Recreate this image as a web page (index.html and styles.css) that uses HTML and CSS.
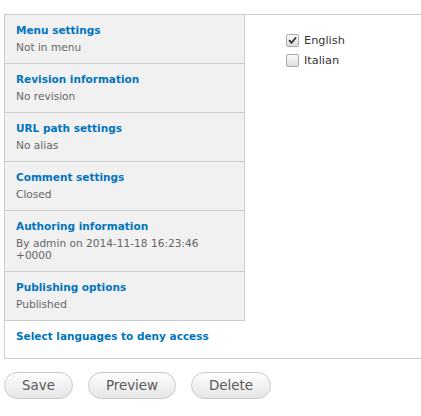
FILE: index.html
```html
<!DOCTYPE html>
<html>
<head>
<meta charset="utf-8">
<link rel="stylesheet" href="styles.css">
</head>
<body>
<div class="page">
  <div class="vtabs">
    <ul class="tablist">
      <li class="tab"><a class="tab-title" href="#">Menu settings</a><span class="summary">Not in menu</span></li>
      <li class="tab"><a class="tab-title" href="#">Revision information</a><span class="summary">No revision</span></li>
      <li class="tab"><a class="tab-title" href="#">URL path settings</a><span class="summary">No alias</span></li>
      <li class="tab"><a class="tab-title" href="#">Comment settings</a><span class="summary">Closed</span></li>
      <li class="tab"><a class="tab-title" href="#">Authoring information</a><span class="summary">By admin on 2014-11-18 16:23:46 +0000</span></li>
      <li class="tab"><a class="tab-title" href="#">Publishing options</a><span class="summary">Published</span></li>
      <li class="tab tab-selected"><a class="tab-title" href="#">Select languages to deny access</a></li>
    </ul>
    <div class="pane">
      <label class="check-row"><span class="checkbox checked"><svg viewBox="0 0 13 13" width="13" height="13"><path d="M3 6.6 L5.4 9.2 L10.2 3.4" fill="none" stroke="#333" stroke-width="2.1" stroke-linecap="round" stroke-linejoin="round"/></svg></span>English</label>
      <label class="check-row"><span class="checkbox"></span>Italian</label>
    </div>
  </div>
  <div class="actions">
    <button class="btn">Save</button>
    <button class="btn">Preview</button>
    <button class="btn">Delete</button>
  </div>
</div>
</body>
</html>
```
FILE: styles.css
```css
html, body {
  margin: 0;
  padding: 0;
  background: #fff;
}
body {
  font-family: "DejaVu Sans", Verdana, sans-serif;
  color: #333;
}
.page {
  padding: 14px 0 0 4px;
}
.vtabs {
  display: flex;
  border: 1px solid #ccc;
  border-right: none;
}
.tablist {
  list-style: none;
  margin: 0;
  padding: 0;
  width: 240px;
  flex: none;
  display: flex;
  flex-direction: column;
}
.tab {
  display: flex;
  flex-direction: column;
  background: #f1f1f1;
  border-right: 1px solid #ccc;
  border-bottom: 1px solid #ccc;
  padding: 9px 11px 10px 11px;
}
.tab-title {
  font-size: 10.5px;
  font-weight: bold;
  line-height: 13px;
  color: #0074bd;
  text-decoration: none;
  margin-bottom: 4px;
}
.summary {
  font-size: 10.6px;
  line-height: 12px;
  color: #666;
}
.tab-selected {
  background: #fff;
  border-right: none;
  border-bottom: none;
  padding-bottom: 15px;
}
.tab-selected .tab-title {
  margin-bottom: 0;
}
.pane {
  flex: 1;
  padding: 19px 0 0 41px;
  display: flex;
  flex-direction: column;
  gap: 7px;
}
.check-row {
  display: flex;
  align-items: center;
  gap: 5px;
  font-size: 11.3px;
  line-height: 13px;
  color: #333;
}
.checkbox {
  width: 11px;
  height: 11px;
  border: 1px solid #a9a9a9;
  border-radius: 2px;
  background: linear-gradient(#fafafa, #dedede);
  display: flex;
  align-items: center;
  justify-content: center;
}
.checkbox svg {
  width: 11px;
  height: 11px;
}
.actions {
  display: flex;
  gap: 15px;
  margin-top: 13px;
}
.btn {
  font-family: "DejaVu Sans", Verdana, sans-serif;
  font-size: 13.4px;
  color: #5a5a5a;
  height: 27px;
  padding: 0 17px;
  border: 1px solid #c8c8c8;
  border-radius: 14px;
  background: linear-gradient(#fdfdfd, #e6e6e6);
  cursor: pointer;
}
```
